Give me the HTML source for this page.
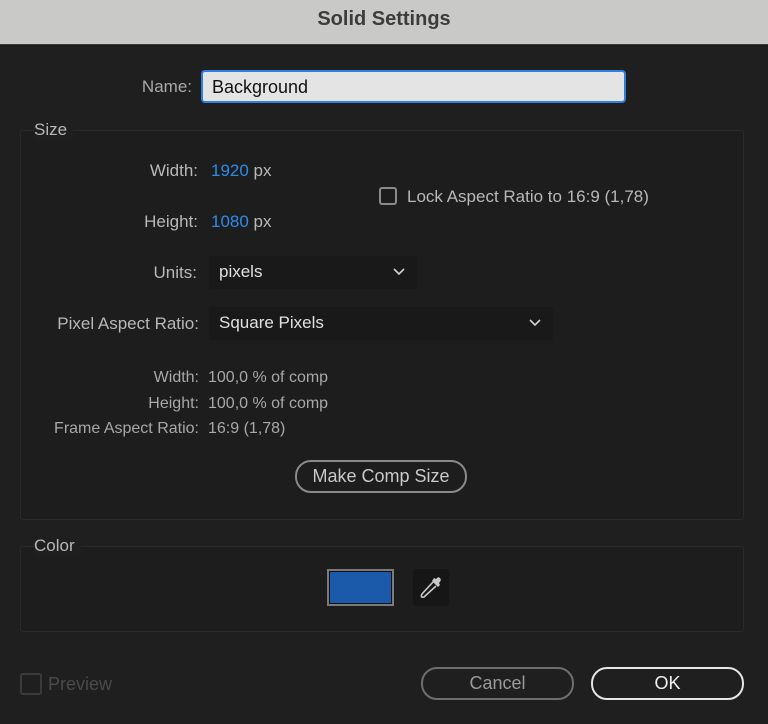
<html><head><style>
body{margin:0;width:768px;height:724px;background:#1f1f1f;font-family:"Liberation Sans",sans-serif;overflow:hidden;position:relative;color:#b8b8b8}
.a{position:absolute;white-space:nowrap}
.t{font-size:17px}
.box{position:absolute;border:1px solid #2a2a2a;background:#1d1d1d;border-radius:3px}
.dd{position:absolute;background:#191919;border-radius:3px;color:#e0e0e0;font-size:17px;box-sizing:border-box;padding:6px 10px}
.btn{position:absolute;border:2px solid #6e6e6e;border-radius:16px;box-sizing:border-box;text-align:center;font-size:18px}
.lbl{position:absolute;right:570px;white-space:nowrap;font-size:17px;text-align:right}
.blue{color:#2d8ceb}
.chev{position:absolute;right:12px;top:12px}
</style></head><body>
<div class="a" style="left:0;top:0;width:768px;height:44px;background:#c9c9c7;border-bottom:1px solid #3a3a3a"></div>
<div class="a" style="left:0;top:8px;width:768px;text-align:center;font-size:20px;font-weight:bold;color:#3c3c3c">Solid Settings</div>
<div class="lbl" style="right:576px;top:77px;color:#a8a8a8">Name:</div>
<div class="a" style="left:201px;top:70px;width:425px;height:33px;background:#e4e4e4;border:2px solid #2f7fe0;border-radius:4px;box-sizing:border-box;color:#111;font-size:18px;padding:5px 9px">Background</div>
<div class="box" style="left:20px;top:130px;width:722px;height:388px"></div>
<div class="a t" style="left:34px;top:120px;background:#1f1f1f;padding-right:6px">Size</div>
<div class="lbl" style="top:161px">Width:</div>
<div class="a t" style="left:211px;top:161px"><span class="blue">1920</span> px</div>
<div class="lbl" style="top:212px">Height:</div>
<div class="a t" style="left:211px;top:212px"><span class="blue">1080</span> px</div>
<div class="a" style="left:379px;top:187px;width:18px;height:18px;border:2px solid #8a8a8a;border-radius:3px;box-sizing:border-box"></div>
<div class="a t" style="left:407px;top:187px">Lock Aspect Ratio to 16:9 (1,78)</div>
<div class="lbl" style="right:571px;top:263px">Units:</div>
<div class="dd" style="left:209px;top:256px;width:208px;height:33px">pixels<svg class="chev" width="12" height="8"><path d="M1 1 L6 6 L11 1" fill="none" stroke="#d0d0d0" stroke-width="1.6"/></svg></div>
<div class="lbl" style="right:569px;top:314px">Pixel Aspect Ratio:</div>
<div class="dd" style="left:209px;top:307px;width:344px;height:33px">Square Pixels<svg class="chev" width="12" height="8"><path d="M1 1 L6 6 L11 1" fill="none" stroke="#d0d0d0" stroke-width="1.6"/></svg></div>
<div class="a" style="left:0;top:365px;width:199px;font-size:16px;line-height:25.5px;text-align:right;color:#a8a8a8">Width:<br>Height:<br>Frame Aspect Ratio:</div>
<div class="a" style="left:208px;top:365px;font-size:16px;line-height:25.5px;color:#a8a8a8">100,0 % of comp<br>100,0 % of comp<br>16:9 (1,78)</div>
<div class="btn" style="left:295px;top:460px;width:172px;height:33px;line-height:29px;border-color:#8a8a8a;color:#c8c8c8">Make Comp Size</div>
<div class="box" style="left:20px;top:546px;width:722px;height:84px"></div>
<div class="a t" style="left:34px;top:536px;background:#1f1f1f;padding-right:6px">Color</div>
<div class="a" style="left:327px;top:569px;width:67px;height:37px;background:#1b5aaa;border:2px solid #7a7a7a;box-sizing:border-box;box-shadow:inset 0 0 0 1px #111"></div>
<div class="a" style="left:413px;top:569px;width:36px;height:37px;background:#161616;border-radius:3px"></div>
<svg class="a" style="left:413px;top:569px" width="36" height="37" viewBox="0 0 36 37"><g fill="none" stroke="#c8c8c8" stroke-width="1.6"><path d="M20 13 L9 25 Q7 29 11 28 L23 17"/></g><path d="M19 12 L25 18 L27 16 L26 14 Q29 11 27 9 Q25 7 23 10 L21 9 Z" fill="#c8c8c8"/></svg>
<div class="a" style="left:20px;top:673px;width:22px;height:22px;border:2px solid #3a3a3a;border-radius:3px;box-sizing:border-box"></div>
<div class="a" style="left:48px;top:674px;font-size:18px;color:#4a4a4a">Preview</div>
<div class="btn" style="left:421px;top:667px;width:153px;height:33px;line-height:29px;color:#9a9a9a">Cancel</div>
<div class="btn" style="left:591px;top:667px;width:153px;height:33px;line-height:29px;border-color:#e6e6e6;color:#f0f0f0">OK</div>
</body></html>
